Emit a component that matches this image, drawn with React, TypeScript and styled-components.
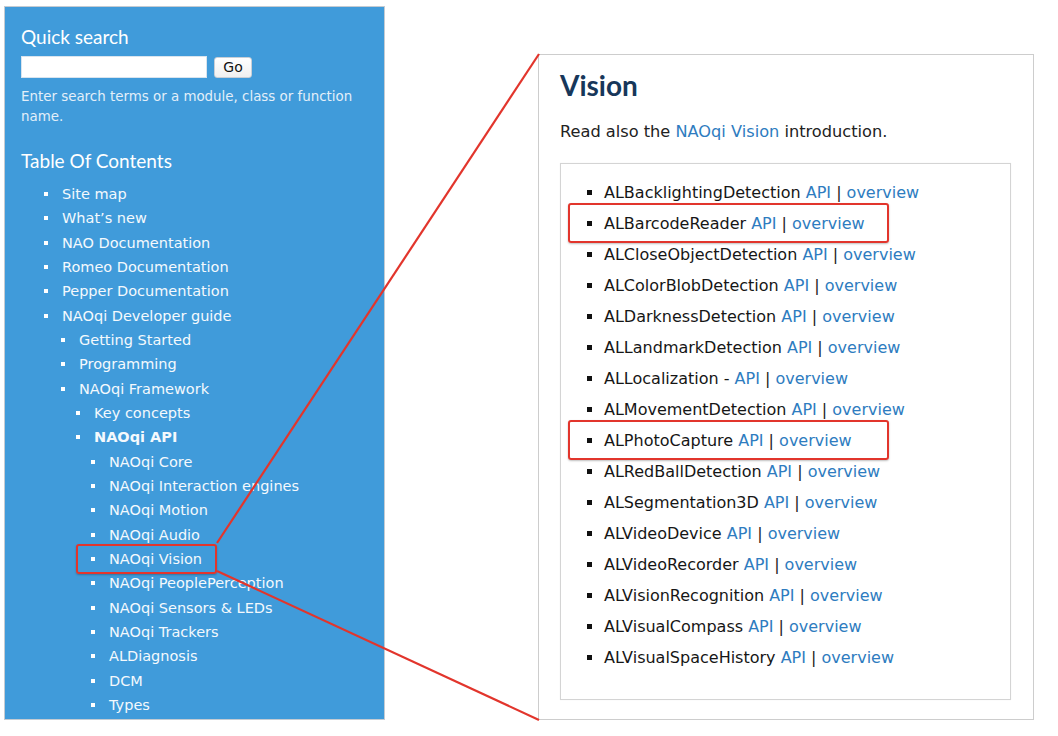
import React from "react";
import styled, { createGlobalStyle } from "styled-components";

const GlobalStyle = createGlobalStyle`
  html, body { margin: 0; padding: 0; background: #ffffff; }
  body { font-family: "DejaVu Sans", Verdana, sans-serif; }
`;

const Page = styled.div`
  position: relative;
  width: 1058px;
  height: 736px;
  display: flex;
  align-items: flex-start;
  padding: 6px 0 0 4px;
  box-sizing: border-box;
  overflow: hidden;
`;

const Sidebar = styled.aside`
  width: 381px;
  height: 714px;
  box-sizing: border-box;
  background: #409bda;
  border: 1px solid #c4cbd2;
  padding: 18px 0 0 16px;
  color: #ffffff;
`;

const SideHeading = styled.h3<{ $mt?: number }>`
  margin: ${(p) => p.$mt ?? 0}px 0 0 0;
  font-family: "Lato", "Open Sans", sans-serif;
  font-weight: 400;
  font-size: 19px;
  line-height: 24px;
  color: #ffffff;
`;

const SearchRow = styled.form`
  display: flex;
  align-items: center;
  gap: 7px;
  margin-top: 7px;
`;

const SearchInput = styled.input`
  width: 186px;
  height: 22px;
  box-sizing: border-box;
  border: 1px solid #d9e4ee;
  background: #ffffff;
  padding: 0 4px;
  margin: 0;
`;

const GoButton = styled.button`
  height: 21px;
  width: 38px;
  box-sizing: border-box;
  border: 1px solid #c9cfd6;
  border-radius: 3px;
  background: linear-gradient(#ffffff, #f0f0f0);
  font-family: "DejaVu Sans", sans-serif;
  font-size: 14px;
  color: #111;
  padding: 0;
  line-height: 19px;
`;

const HelpText = styled.p`
  margin: 9px 0 0 0;
  font-size: 13.4px;
  line-height: 20px;
  color: #e3eff9;
  width: 345px;
`;

const TocList = styled.ul`
  list-style: none;
  margin: 9px 0 0 0;
  padding: 0;
`;

const TocItem = styled.li<{ $level: number; $bold?: boolean }>`
  position: relative;
  display: flex;
  align-items: center;
  gap: 14px;
  height: 24.33px;
  margin-left: ${(p) => [23, 40, 55, 70][p.$level]}px;
  font-size: 14.5px;
  font-weight: ${(p) => (p.$bold ? 700 : 400)};
  color: #f4f9fd;
  white-space: nowrap;
  &::before {
    content: "";
    width: 4px;
    height: 4px;
    background: #ffffff;
    flex: none;
  }
`;

const Callout = styled.span<{ $w: number; $h: number; $dx: number; $dy: number }>`
  position: absolute;
  left: ${(p) => p.$dx}px;
  top: ${(p) => p.$dy}px;
  width: ${(p) => p.$w}px;
  height: ${(p) => p.$h}px;
  border: 2px solid #e2352c;
  border-radius: 3px;
  box-sizing: border-box;
  box-shadow: 0 1px 2px rgba(0, 0, 0, 0.25);
  pointer-events: none;
`;

const Panel = styled.section`
  margin: 48px 0 0 153px;
  width: 496px;
  height: 666px;
  box-sizing: border-box;
  border: 1px solid #cdcdcd;
  background: #ffffff;
  padding: 14px 21px 0 21px;
`;

const Title = styled.h1`
  margin: 0;
  font-family: "Lato", "Open Sans", sans-serif;
  font-weight: 700;
  font-size: 28px;
  line-height: 32px;
  color: #17375a;
`;

const Intro = styled.p`
  margin: 21px 0 0 0;
  font-size: 16.2px;
  line-height: 20px;
  color: #222222;
`;

const Link = styled.a`
  color: #2e7cc0;
  text-decoration: none;
`;

const ModuleBox = styled.div`
  margin-top: 21px;
  width: 451px;
  height: 537px;
  box-sizing: border-box;
  border: 1px solid #d4d4d4;
  box-shadow: 0 0 1px rgba(0, 0, 0, 0.08);
  padding: 13px 0 0 26px;
`;

const ModuleList = styled.ul`
  list-style: none;
  margin: 0;
  padding: 0;
`;

const ModuleItem = styled.li`
  position: relative;
  display: flex;
  align-items: center;
  gap: 12px;
  height: 31px;
  font-size: 16px;
  color: #161616;
  white-space: pre;
  &::before {
    content: "";
    width: 5px;
    height: 5px;
    background: #111111;
    flex: none;
  }
`;

const Sep = styled.span`
  color: #222;
`;

const Overlay = styled.svg`
  position: absolute;
  left: 0;
  top: 0;
  pointer-events: none;
`;

type Toc = { label: string; level: number; bold?: boolean; mark?: boolean };

const toc: Toc[] = [
  { label: "Site map", level: 0 },
  { label: "What’s new", level: 0 },
  { label: "NAO Documentation", level: 0 },
  { label: "Romeo Documentation", level: 0 },
  { label: "Pepper Documentation", level: 0 },
  { label: "NAOqi Developer guide", level: 0 },
  { label: "Getting Started", level: 1 },
  { label: "Programming", level: 1 },
  { label: "NAOqi Framework", level: 1 },
  { label: "Key concepts", level: 2 },
  { label: "NAOqi API", level: 2, bold: true },
  { label: "NAOqi Core", level: 3 },
  { label: "NAOqi Interaction engines", level: 3 },
  { label: "NAOqi Motion", level: 3 },
  { label: "NAOqi Audio", level: 3 },
  { label: "NAOqi Vision", level: 3, mark: true },
  { label: "NAOqi PeoplePerception", level: 3 },
  { label: "NAOqi Sensors & LEDs", level: 3 },
  { label: "NAOqi Trackers", level: 3 },
  { label: "ALDiagnosis", level: 3 },
  { label: "DCM", level: 3 },
  { label: "Types", level: 3 },
];

type Mod = { name: string; dash?: boolean; mark?: boolean };

const modules: Mod[] = [
  { name: "ALBacklightingDetection" },
  { name: "ALBarcodeReader", mark: true },
  { name: "ALCloseObjectDetection" },
  { name: "ALColorBlobDetection" },
  { name: "ALDarknessDetection" },
  { name: "ALLandmarkDetection" },
  { name: "ALLocalization", dash: true },
  { name: "ALMovementDetection" },
  { name: "ALPhotoCapture", mark: true },
  { name: "ALRedBallDetection" },
  { name: "ALSegmentation3D" },
  { name: "ALVideoDevice" },
  { name: "ALVideoRecorder" },
  { name: "ALVisionRecognition" },
  { name: "ALVisualCompass" },
  { name: "ALVisualSpaceHistory" },
];

export default function App() {
  return (
    <>
      <GlobalStyle />
      <Page>
        <Sidebar>
          <SideHeading>Quick search</SideHeading>
          <SearchRow onSubmit={(e) => e.preventDefault()}>
            <SearchInput type="text" aria-label="search" />
            <GoButton type="submit">Go</GoButton>
          </SearchRow>
          <HelpText>Enter search terms or a module, class or function name.</HelpText>
          <SideHeading $mt={22}>Table Of Contents</SideHeading>
          <TocList>
            {toc.map((t) => (
              <TocItem key={t.label} $level={t.level} $bold={t.bold}>
                {t.label}
                {t.mark && <Callout $w={141} $h={30} $dx={-15} $dy={-3} />}
              </TocItem>
            ))}
          </TocList>
        </Sidebar>
        <Panel>
          <Title>Vision</Title>
          <Intro>
            Read also the <Link href="#">NAOqi Vision</Link> introduction.
          </Intro>
          <ModuleBox>
            <ModuleList>
              {modules.map((m) => (
                <ModuleItem key={m.name}>
                  <span>
                    {m.name}
                    {m.dash ? " - " : " "}
                    <Link href="#">API</Link>
                    <Sep> | </Sep>
                    <Link href="#">overview</Link>
                  </span>
                  {m.mark && <Callout $w={321} $h={40} $dx={-19} $dy={-5} />}
                </ModuleItem>
              ))}
            </ModuleList>
          </ModuleBox>
        </Panel>
        <Overlay width="1058" height="736" viewBox="0 0 1058 736">
          <line x1="217" y1="543" x2="539" y2="54" stroke="#e2352c" strokeWidth="2.2" />
          <line x1="217" y1="571" x2="539" y2="720" stroke="#e2352c" strokeWidth="2.2" />
        </Overlay>
      </Page>
    </>
  );
}
